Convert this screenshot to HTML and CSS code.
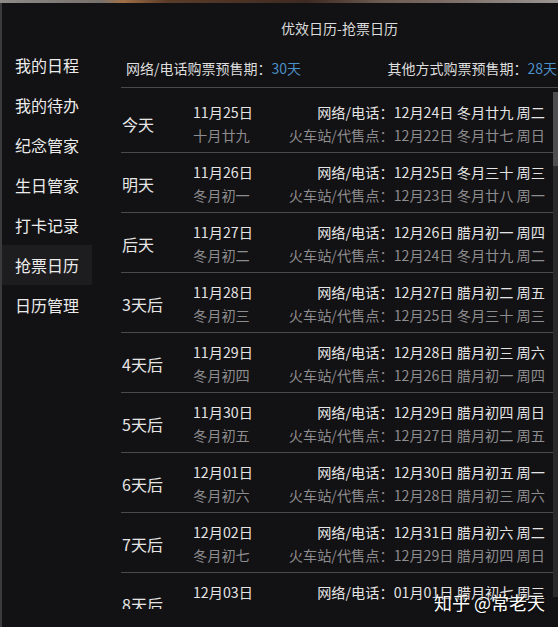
FILE: index.html
```html
<!DOCTYPE html>
<html lang="zh-CN">
<head>
    <meta charset="UTF-8">
    <meta name="viewport" content="width=device-width, initial-scale=1.0">
    <title>优效日历-抢票日历</title>
    <link rel="stylesheet" href="styles.css">
</head>
<body>

    <div class="strip"></div>

    <div class="window">
        <aside class="sidebar">
            <a class="side-item">我的日程</a>
            <a class="side-item">我的待办</a>
            <a class="side-item">纪念管家</a>
            <a class="side-item">生日管家</a>
            <a class="side-item">打卡记录</a>
            <a class="side-item active">抢票日历</a>
            <a class="side-item">日历管理</a>
        </aside>

        <main class="main">
            <h1 class="title">优效日历-抢票日历</h1>

            <div class="presale">
                <span>网络/电话购票预售期：<em>30天</em></span>
                <span>其他方式购票预售期：<em>28天</em></span>
            </div>

            <div class="list-wrap">
                <div class="list">
                    <div class="row">
                        <div class="day">今天</div>
                        <div class="date"><p>11月25日</p><p class="sub">十月廿九</p></div>
                        <div class="buy"><p>网络/电话：12月24日 冬月廿九 周二</p><p class="sub">火车站/代售点：12月22日 冬月廿七 周日</p></div>
                    </div>
                    <div class="row">
                        <div class="day">明天</div>
                        <div class="date"><p>11月26日</p><p class="sub">冬月初一</p></div>
                        <div class="buy"><p>网络/电话：12月25日 冬月三十 周三</p><p class="sub">火车站/代售点：12月23日 冬月廿八 周一</p></div>
                    </div>
                    <div class="row">
                        <div class="day">后天</div>
                        <div class="date"><p>11月27日</p><p class="sub">冬月初二</p></div>
                        <div class="buy"><p>网络/电话：12月26日 腊月初一 周四</p><p class="sub">火车站/代售点：12月24日 冬月廿九 周二</p></div>
                    </div>
                    <div class="row">
                        <div class="day">3天后</div>
                        <div class="date"><p>11月28日</p><p class="sub">冬月初三</p></div>
                        <div class="buy"><p>网络/电话：12月27日 腊月初二 周五</p><p class="sub">火车站/代售点：12月25日 冬月三十 周三</p></div>
                    </div>
                    <div class="row">
                        <div class="day">4天后</div>
                        <div class="date"><p>11月29日</p><p class="sub">冬月初四</p></div>
                        <div class="buy"><p>网络/电话：12月28日 腊月初三 周六</p><p class="sub">火车站/代售点：12月26日 腊月初一 周四</p></div>
                    </div>
                    <div class="row">
                        <div class="day">5天后</div>
                        <div class="date"><p>11月30日</p><p class="sub">冬月初五</p></div>
                        <div class="buy"><p>网络/电话：12月29日 腊月初四 周日</p><p class="sub">火车站/代售点：12月27日 腊月初二 周五</p></div>
                    </div>
                    <div class="row">
                        <div class="day">6天后</div>
                        <div class="date"><p>12月01日</p><p class="sub">冬月初六</p></div>
                        <div class="buy"><p>网络/电话：12月30日 腊月初五 周一</p><p class="sub">火车站/代售点：12月28日 腊月初三 周六</p></div>
                    </div>
                    <div class="row">
                        <div class="day">7天后</div>
                        <div class="date"><p>12月02日</p><p class="sub">冬月初七</p></div>
                        <div class="buy"><p>网络/电话：12月31日 腊月初六 周二</p><p class="sub">火车站/代售点：12月29日 腊月初四 周日</p></div>
                    </div>
                    <div class="row">
                        <div class="day">8天后</div>
                        <div class="date"><p>12月03日</p><p class="sub">冬月初八</p></div>
                        <div class="buy"><p>网络/电话：01月01日 腊月初七 周三</p><p class="sub">火车站/代售点：12月30日 腊月初五 周一</p></div>
                    </div>
                </div>
                <div class="scrollbar"><div class="thumb"></div></div>
            </div>
        </main>
    </div>

    <div class="watermark">知乎 @常老天</div>

</body>
</html>
```

FILE: styles.css
```css
body {
    margin: 0;
    padding: 0;
    width: 558px;
    height: 627px;
    overflow: hidden;
    background-color: #121113;
    color: #e4e4e4;
    font-family: "Noto Sans CJK SC", "Microsoft YaHei", sans-serif;
    position: relative;
}

p {
    margin: 0;
}

/* thin strip of the desktop showing above the window */
.strip {
    height: 3px;
    background: linear-gradient(90deg, #8d8a88 0%, #77716c 18%, #a06f47 22%, #5a3b28 30%, #3d2a22 55%, #6b5a50 68%, #7c6d66 80%, #9a9592 100%);
}

.window {
    display: flex;
    height: 624px;
    border-left: 2px solid #3a393b;
}

.sidebar {
    width: 90px;
    padding-top: 42px;
    display: flex;
    flex-direction: column;
}

.side-item {
    height: 40px;
    line-height: 40px;
    padding-left: 13px;
    font-size: 16px;
    color: #ececec;
    cursor: pointer;
}

.side-item.active {
    background-color: #1d1c1e;
}

.main {
    flex: 1;
    margin-left: 29px;
    display: flex;
    flex-direction: column;
}

.title {
    margin: 15px 0 0;
    font-size: 14px;
    font-weight: normal;
    line-height: 20px;
    text-align: center;
    color: #dcdcdc;
}

.presale {
    display: flex;
    justify-content: space-between;
    margin-top: 20px;
    padding: 0 1px 9px 5px;
    font-size: 14px;
    line-height: 20px;
    color: #dedede;
    border-bottom: 1px solid #4a494b;
    white-space: nowrap;
}

.presale em {
    font-style: normal;
    color: #4b8fc7;
}

.list-wrap {
    display: flex;
    height: 521px;
}

.list {
    flex: 1;
    overflow: hidden;
    padding-top: 5px;
}

.row {
    display: flex;
    align-items: center;
    height: 59px;
    padding: 0 8px 0 1px;
    border-bottom: 1px solid #4a494b;
    font-size: 14.2px;
}

.row p {
    line-height: 23px;
}

.row .sub {
    color: #8d8c8e;
}

.day {
    width: 71px;
    font-size: 16px;
    color: #e6e6e6;
    padding-top: 3px;
}

.date, .buy {
    padding-top: 3px;
}

.date {
    width: 80px;
}

.buy {
    flex: 1;
    text-align: right;
    white-space: nowrap;
}

.scrollbar {
    width: 5px;
    margin: 4px 0 12px;
    background-color: #2a292b;
}

.thumb {
    height: 74px;
    background-color: #4e4d4f;
}

.watermark {
    position: absolute;
    right: 13px;
    bottom: 12px;
    font-size: 18px;
    color: #ffffff;
    text-shadow: 0 0 3px rgba(0, 0, 0, 0.8);
}
```
